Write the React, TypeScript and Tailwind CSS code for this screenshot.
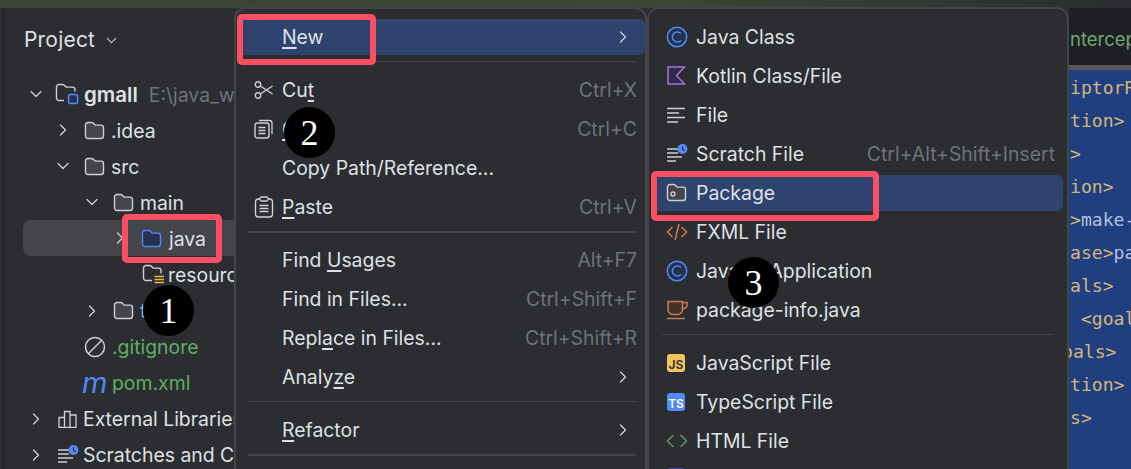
import type { ReactNode } from "react";
import { ChevronDown, ChevronRight } from "lucide-react";

const folderPath = "M1.5 4a2.5 2.5 0 0 1 2.5-2.5h3.6c.6 0 1.1.2 1.5.6l2 2h5.9a2.5 2.5 0 0 1 2.5 2.5v8.4a2.5 2.5 0 0 1-2.5 2.5H4a2.5 2.5 0 0 1-2.5-2.5z";

function Folder({ fill = "#43454a", stroke = "#ced0d6" }: { fill?: string; stroke?: string }) {
  return (
    <svg width="21" height="19" viewBox="0 0 21 19" className="shrink-0">
      <path d={folderPath} fill={fill} stroke={stroke} strokeWidth="1.4" />
    </svg>
  );
}

function ModuleFolder() {
  return (
    <svg width="24" height="22" viewBox="0 0 24 22" className="shrink-0">
      <path d="M1.5 4a2.5 2.5 0 0 1 2.5-2.5h3.6c.6 0 1.1.2 1.5.6l2 2h6.4a2.5 2.5 0 0 1 2.5 2.5v2M9 17.5H4a2.5 2.5 0 0 1-2.5-2.5V4" fill="none" stroke="#ced0d6" strokeWidth="1.4" />
      <rect x="13.6" y="11.6" width="9" height="9" rx="2" fill="#25324d" stroke="#548af7" strokeWidth="1.5" />
    </svg>
  );
}

function ResourceFolder() {
  return (
    <svg width="23" height="21" viewBox="0 0 23 21" className="shrink-0">
      <path d="M1.5 4a2.5 2.5 0 0 1 2.5-2.5h3.6c.6 0 1.1.2 1.5.6l2 2h5.4a2.5 2.5 0 0 1 2.5 2.5v3M10 16.5H4a2.5 2.5 0 0 1-2.5-2.5V4" fill="none" stroke="#ced0d6" strokeWidth="1.4" />
      <path d="M12.5 12.5h9.5M12.5 15.5h9.5M12.5 18.5h9.5" stroke="#e8b84a" strokeWidth="1.6" />
    </svg>
  );
}

function Ignored() {
  return (
    <svg width="22" height="22" viewBox="0 0 22 22" className="shrink-0">
      <circle cx="11" cy="11" r="9.5" fill="none" stroke="#ced0d6" strokeWidth="1.5" />
      <path d="M4.5 17.5L17.5 4.5" stroke="#ced0d6" strokeWidth="1.5" />
    </svg>
  );
}

function Libraries() {
  return (
    <svg width="20" height="18" viewBox="0 0 20 18" className="shrink-0">
      <path d="M1 7.500h5.500v10H1zM6.500 1.500H12v16H6.500zM12 5h6v12.500h-6z" fill="none" stroke="#ced0d6" strokeWidth="1.300" />
    </svg>
  );
}

function Scratch() {
  return (
    <svg width="22" height="20" viewBox="0 0 22 20" className="shrink-0">
      <path d="M1 5h11M1 9h11M1 13h15M1 17h9" stroke="#ced0d6" strokeWidth="1.4" />
      <circle cx="16.500" cy="5" r="5" fill="#548af7" />
      <path d="M16.500 2.200V5.300l2 1.500" fill="none" stroke="#2b2d30" strokeWidth="1.200" />
    </svg>
  );
}

function Scissors() {
  return (
    <svg width="20" height="20" viewBox="0 0 20 20">
      <circle cx="4" cy="4.500" r="2.700" fill="none" stroke="#ced0d6" strokeWidth="1.400" />
      <circle cx="4" cy="15.500" r="2.700" fill="none" stroke="#ced0d6" strokeWidth="1.400" />
      <path d="M6.300 6L18.500 14M6.300 14L18.500 6" stroke="#ced0d6" strokeWidth="1.400" />
    </svg>
  );
}

function CopyDoc() {
  return (
    <svg width="20" height="20" viewBox="0 0 20 20">
      <path d="M5 1.500h10.500a2.500 2.500 0 0 1 2.500 2.500v11" fill="none" stroke="#ced0d6" strokeWidth="1.300" />
      <rect x="1" y="4" width="14" height="15" rx="2.500" fill="none" stroke="#ced0d6" strokeWidth="1.400" />
      <path d="M4.500 8.500h7M4.500 11.500h7M4.500 14.500h7" stroke="#ced0d6" strokeWidth="1.300" />
    </svg>
  );
}

function Clipboard() {
  return (
    <svg width="20" height="22" viewBox="0 0 20 22">
      <rect x="1.500" y="3" width="17" height="18" rx="3" fill="none" stroke="#ced0d6" strokeWidth="1.400" />
      <rect x="6" y="1" width="8" height="4" rx="1.500" fill="#2b2d30" stroke="#ced0d6" strokeWidth="1.300" />
      <path d="M5.500 9.500h9M5.500 12.500h9M5.500 15.500h9" stroke="#ced0d6" strokeWidth="1.300" />
    </svg>
  );
}

function ClassIcon() {
  return (
    <svg width="22" height="22" viewBox="0 0 22 22">
      <circle cx="11" cy="11" r="9.700" fill="#25324d" stroke="#548af7" strokeWidth="1.500" />
      <path d="M15 7.600a5 5 0 1 0 0 6.800" fill="none" stroke="#548af7" strokeWidth="1.500" />
    </svg>
  );
}

function KotlinIcon() {
  return (
    <svg width="19" height="19" viewBox="0 0 19 19" className="ml-[1px]">
      <path d="M1 1h16.500l-8 8.500 8 8.500H1z" fill="#2f2a45" stroke="#a571e6" strokeWidth="1.500" />
    </svg>
  );
}

function FileLines() {
  return (
    <svg width="18" height="16" viewBox="0 0 18 16" className="ml-[1px]">
      <path d="M0 1.500h18M0 6h12M0 10.500h18M0 15h11" stroke="#ced0d6" strokeWidth="1.500" />
    </svg>
  );
}

function PackageIcon() {
  return (
    <svg width="21" height="19" viewBox="0 0 21 19">
      <path d={folderPath} fill="#43454a" stroke="#ced0d6" strokeWidth="1.400" />
      <circle cx="7" cy="11" r="2" fill="none" stroke="#ced0d6" strokeWidth="1.300" />
    </svg>
  );
}

function FxmlIcon() {
  return (
    <svg width="22" height="18" viewBox="0 0 22 18">
      <path d="M6.500 4L1.500 9l5 5M15.500 4l5 5-5 5M13 1L9 17" fill="none" stroke="#c77d55" strokeWidth="1.500" />
    </svg>
  );
}

function CupIcon() {
  return (
    <svg width="21" height="20" viewBox="0 0 21 20" className="ml-[1px]">
      <path d="M1 1.500h14.500v8a5 5 0 0 1-5 5H6a5 5 0 0 1-5-5z" fill="#45322b" stroke="#c77d55" strokeWidth="1.500" />
      <path d="M15.500 2.500H20v3a3 3 0 0 1-4.500 2.500M0 18.500h18" fill="none" stroke="#c77d55" strokeWidth="1.500" />
    </svg>
  );
}

function HtmlIcon() {
  return (
    <svg width="22" height="14" viewBox="0 0 22 14">
      <path d="M7.500 1L1.500 7l6 6M14.500 1l6 6-6 6" fill="none" stroke="#57965c" strokeWidth="1.600" />
    </svg>
  );
}

function Badge({ label, className }: { label: string; className: string }) {
  return (
    <div className={`ml-[1px] flex h-[18px] w-[18px] items-end justify-center rounded-[3px] pb-[1px] text-[12px] leading-[13px] font-semibold ${className}`}>
      {label}
    </div>
  );
}

type TreeRow = { indent: string; gap?: string; open?: boolean; icon: ReactNode; name: ReactNode; extra?: string; selected?: boolean };

const treeRows: TreeRow[] = [
  { indent: "pl-[25px]", gap: "mr-[9px]", open: true, icon: <ModuleFolder />, name: <span className="ml-[5px] text-[20.500px] font-semibold text-[#dfe1e5]">gmall</span>, extra: "E:\\java_workspace\\gmall" },
  { indent: "pl-[52px]", gap: "mr-[11px]", open: false, icon: <Folder />, name: <span className="ml-[6px]">.idea</span> },
  { indent: "pl-[52px]", gap: "mr-[11px]", open: true, icon: <Folder />, name: <span className="ml-[6px]">src</span> },
  { indent: "pl-[81px]", gap: "mr-[11px]", open: true, icon: <Folder />, name: <span className="ml-[6px]">main</span> },
  { indent: "pl-[109px]", gap: "mr-[11px]", open: false, selected: true, icon: <Folder fill="#25324d" stroke="#548af7" />, name: <span className="ml-[7px]">java</span> },
  { indent: "pl-[138px]", icon: <ResourceFolder />, name: <span className="ml-[3px]">resources</span> },
  { indent: "pl-[81px]", gap: "mr-[11px]", open: false, icon: <Folder />, name: <span className="ml-[6px] text-[#7fb0ec]">test</span> },
  { indent: "pl-[80px]", icon: <Ignored />, name: <span className="ml-[6px] text-[#5fad65]">.gitignore</span> },
  { indent: "pl-[78px]", icon: <span className="w-[24px] text-center text-[29px] leading-none text-[#548af7] italic">m</span>, name: <span className="ml-[6px] text-[#5fad65]">pom.xml</span> },
  { indent: "pl-[25px]", gap: "mr-[12px]", open: false, icon: <Libraries />, name: <span className="ml-[5px]">External Libraries</span> },
  { indent: "pl-[25px]", gap: "mr-[11px]", open: false, icon: <Scratch />, name: <span className="ml-[4px]">Scratches and Consoles</span> },
];

function Sidebar() {
  return (
    <aside className="ml-[3px] w-[231px] shrink-0 overflow-hidden border-l border-[#1e1f22] text-[19.400px] text-[#dfe1e5]">
      <div className="flex h-[68px] items-center gap-[8px] pb-[6px] pl-[20px]">
        <span className="mt-[2px] text-[21px] tracking-[0.2px]">Project</span>
        <ChevronDown size={17} strokeWidth={1.5} className="mt-[2px] text-[#ced0d6]" />
      </div>
      {treeRows.map((row, i) => (
        <div
          key={i}
          className={`flex h-[36.100px] items-center whitespace-nowrap ${row.indent} ${row.selected ? "ml-[19px] rounded-l-lg bg-[#43454a] !pl-[90px]" : ""}`}
        >
          {row.open !== undefined && (
            <span className={`-ml-[3px] ${row.gap}`}>
              {row.open ? (
                <ChevronDown size={20} strokeWidth={1.5} className="text-[#ced0d6]" />
              ) : (
                <ChevronRight size={20} strokeWidth={1.5} className="text-[#ced0d6]" />
              )}
            </span>
          )}
          {row.icon}
          <span className="mt-[2px]">
            {row.name}
            {row.extra && <span className="ml-[11px] text-[#6f737a]">{row.extra}</span>}
          </span>
        </div>
      ))}
    </aside>
  );
}

function Key({ children }: { children: string }) {
  return <span className="underline decoration-[1.5px] underline-offset-[3px]">{children}</span>;
}

function MenuRow({ icon, children, shortcut, submenu, active, pad, iconCol }: { icon?: ReactNode; children: ReactNode; shortcut?: string; submenu?: boolean; active?: boolean; pad: string; iconCol: string }) {
  return (
    <div className="flex h-[39px] items-center">
      <div className={`flex h-[36px] flex-1 items-center rounded-[6px] ${pad} ${active ? "bg-[#2e436e]" : ""}`}>
        <div className={`flex shrink-0 items-center ${iconCol}`}>{icon}</div>
        <span className="mt-[2px] flex-1 whitespace-nowrap">{children}</span>
        {shortcut && <span className="mt-[2px] text-[#6f737a]">{shortcut}</span>}
        {submenu && <ChevronRight size={20} strokeWidth={1.5} className="mr-[4px] text-[#ced0d6]" />}
      </div>
    </div>
  );
}

function Separator({ thick }: { thick?: boolean }) {
  return (
    <div className="h-[14px] pt-[5px]">
      <div className={`mr-[9px] ml-[9px] bg-[#43454a] ${thick ? "h-[2px]" : "h-[1px]"}`} />
    </div>
  );
}

function FirstMenu() {
  const p = { pad: "pl-[15px] pr-[8px]", iconCol: "w-[28px]" };
  return (
    <div className="-mt-[1px] h-[480px] w-[413px] shrink-0 rounded-t-[12px] border-2 border-[#43454a] bg-[#2b2d30] pt-[8px] pl-[3px] text-[19.400px] text-[#dfe1e5]">
      <MenuRow {...p} active submenu>
        <Key>N</Key>ew
      </MenuRow>
      <Separator />
      <MenuRow {...p} icon={<Scissors />} shortcut="Ctrl+X">
        Cu<Key>t</Key>
      </MenuRow>
      <MenuRow {...p} icon={<CopyDoc />} shortcut="Ctrl+C">
        <Key>C</Key>opy
      </MenuRow>
      <MenuRow {...p}>Copy Path/Reference...</MenuRow>
      <MenuRow {...p} icon={<Clipboard />} shortcut="Ctrl+V">
        <Key>P</Key>aste
      </MenuRow>
      <Separator thick />
      <MenuRow {...p} shortcut="Alt+F7">
        Find <Key>U</Key>sages
      </MenuRow>
      <MenuRow {...p} shortcut="Ctrl+Shift+F">Find in Files...</MenuRow>
      <MenuRow {...p} shortcut="Ctrl+Shift+R">
        Repl<Key>a</Key>ce in Files...
      </MenuRow>
      <MenuRow {...p} submenu>
        Analy<Key>z</Key>e
      </MenuRow>
      <Separator />
      <MenuRow {...p} submenu>
        <Key>R</Key>efactor
      </MenuRow>
      <Separator thick />
    </div>
  );
}

function SecondMenu() {
  const p = { pad: "pl-[13px] pr-[8px]", iconCol: "w-[30px]" };
  return (
    <div className="-mt-[1px] h-[480px] w-[422px] shrink-0 rounded-t-[12px] border-2 border-[#43454a] bg-[#2b2d30] pt-[8px] pr-[4px] pl-[4px] text-[19.400px] text-[#dfe1e5]">
      <MenuRow {...p} icon={<ClassIcon />}>Java Class</MenuRow>
      <MenuRow {...p} icon={<KotlinIcon />}>Kotlin Class/File</MenuRow>
      <MenuRow {...p} icon={<FileLines />}>File</MenuRow>
      <MenuRow {...p} icon={<Scratch />} shortcut="Ctrl+Alt+Shift+Insert">Scratch File</MenuRow>
      <MenuRow {...p} icon={<PackageIcon />} active>Package</MenuRow>
      <MenuRow {...p} icon={<FxmlIcon />}>FXML File</MenuRow>
      <MenuRow {...p} icon={<ClassIcon />}>JavaFX Application</MenuRow>
      <MenuRow {...p} icon={<CupIcon />}>package-info.java</MenuRow>
      <Separator />
      <MenuRow {...p} icon={<Badge label="JS" className="bg-[#f2c55c] text-[#2b2d30]" />}>JavaScript File</MenuRow>
      <MenuRow {...p} icon={<Badge label="TS" className="bg-[#548af7] text-white" />}>TypeScript File</MenuRow>
      <MenuRow {...p} icon={<HtmlIcon />}>HTML File</MenuRow>
      <MenuRow {...p} icon={<div className="-mt-[5px] ml-[1px] h-[18px] w-[18px] rounded-[3px] bg-[#3b4a9c]" />}>CSS File</MenuRow>
    </div>
  );
}

const tag = "text-[#d5b778]";
const plain = "text-[#b4c0dc]";
const codeLines: { text: string; cls: string; rest?: string; offset?: string }[] = [
  { text: "iptorR", cls: tag },
  { text: "tion>", cls: tag },
  { text: ">", cls: tag },
  { text: "ion>", cls: tag },
  { text: ">", cls: tag, rest: "make-" },
  { text: "ase>", cls: tag, rest: "pa" },
  { text: "als>", cls: tag },
  { text: " <goal", cls: tag },
  { text: "oals>", cls: tag, offset: "-ml-[8px]" },
  { text: "tion>", cls: tag },
  { text: "s>", cls: tag },
];

function CodePane() {
  return (
    <div className="min-w-0 flex-1 overflow-hidden bg-[#1e1f22] font-['DejaVu_Sans_Mono',monospace] text-[18.100px] whitespace-pre">
      <div className="flex h-[57px] items-center pt-[6px] pl-[1px] font-['Inter',sans-serif] text-[18.500px] text-[#6aab73]">
        ntercep
      </div>
      <div className="h-[5px] bg-[#55575b]" />
      <div className="h-full bg-[#1f3f80] pt-[1px]">
        {codeLines.map((line, i) => (
          <div key={i} className={`h-[33px] pl-[1px] leading-[33px] ${line.offset ?? ""}`}>
            <span className={line.cls}>{line.text}</span>
            {line.rest && <span className={plain}>{line.rest}</span>}
          </div>
        ))}
      </div>
    </div>
  );
}

const boxes = [
  "left-[122px] top-[214px] h-[49px] w-[100px]",
  "left-[237px] top-[14px] h-[51px] w-[139px]",
  "left-[651px] top-[171px] h-[50px] w-[228px]",
];

const marks = [
  { n: "1", pos: "left-[143px] top-[285px]" },
  { n: "2", pos: "left-[284px] top-[107px]" },
  { n: "3", pos: "left-[728px] top-[257px]" },
];

export default function App() {
  return (
    <div className="relative flex h-[469px] w-[1131px] flex-col overflow-hidden bg-[#2b2d30] font-['Inter',sans-serif] text-[20px]">
      <div className="h-[8px] shrink-0 bg-linear-to-r from-[#3b4434] via-[#3d4535] via-60% to-[#2b2d30]" />
      <div className="flex min-h-0 flex-1">
        <Sidebar />
        <FirstMenu />
        <SecondMenu />
        <CodePane />
      </div>

      {/* annotations on top of the screenshot */}
      {boxes.map((b) => (
        <div key={b} className={`absolute rounded-[5px] border-[6px] border-[#fb4f63] ${b}`} />
      ))}
      {marks.map((m) => (
        <div key={m.n} className={`absolute flex h-[51px] w-[51px] items-center justify-center rounded-full bg-black font-['Liberation_Serif',serif] text-[36px] text-white ${m.pos}`}>
          {m.n}
        </div>
      ))}
    </div>
  );
}
